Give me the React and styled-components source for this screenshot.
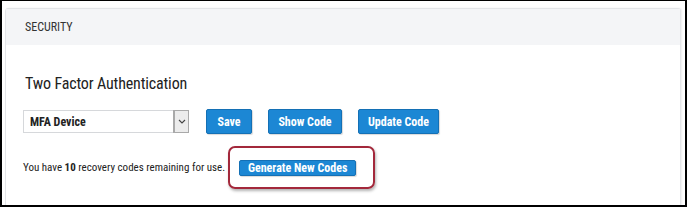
import React from "react";
import styled, { createGlobalStyle } from "styled-components";

const Global = createGlobalStyle`
  html, body { margin: 0; padding: 0; background: #fff; }
  body { font-family: "Roboto Condensed", "Liberation Sans Narrow", Roboto, sans-serif; }
`;

const Frame = styled.div`
  box-sizing: border-box;
  width: 687px;
  height: 207px;
  border: solid #000;
  border-width: 1px 2px 2px 2px;
  padding: 7px 4px 0 3px;
  overflow: hidden;
  background: #fff;
`;

const Card = styled.section`
  box-sizing: border-box;
  height: 210px;
  border: 1px solid #e3e5e8;
  border-radius: 3px;
  box-shadow: 1px 0 2px rgba(0, 0, 0, 0.08);
  background: #fff;
`;

const Header = styled.header`
  height: 36px;
  background: #f4f5f7;
  display: flex;
  align-items: center;
  padding-left: 19px;
  font-size: 12px;
  color: #333;
`;

const Body = styled.div`
  padding: 29px 0 0 19px;
  display: flex;
  flex-direction: column;
`;

const Title = styled.h2`
  margin: 0;
  font-weight: 400;
  font-size: 16px;
  letter-spacing: -0.15px;
  color: #222;
  line-height: 20px;
`;

const Row = styled.div`
  display: flex;
  align-items: center;
  gap: 16px;
  margin: 15px 0 0 -2px;
`;

const SelectBox = styled.div`
  box-sizing: border-box;
  width: 166px;
  height: 23px;
  border: 1px solid #d6d8db;
  display: flex;
  align-items: stretch;
  margin-right: 1px;
  background: #fff;
`;

const SelectText = styled.span`
  flex: 1;
  display: flex;
  align-items: center;
  padding-left: 6px;
  font-size: 12px;
  font-weight: 700;
  color: #222;
`;

const Arrow = styled.span`
  width: 13px;
  background: #ececec;
  border-left: 1px solid #a9a9a9;
  outline: 1px solid #a9a9a9;
  display: flex;
  align-items: center;
  justify-content: center;
`;

const Button = styled.button`
  box-sizing: border-box;
  height: ${(p) => (p.$small ? 16 : 25)}px;
  width: ${(p) => p.$w}px;
  padding: 0;
  border: 1px solid #1470b5;
  border-radius: 2px;
  background: #1c87d4;
  color: #fff;
  font-family: inherit;
  font-size: 12px;
  font-weight: 700;
  box-shadow: 1px 1px 1px rgba(0, 0, 0, 0.15);
  cursor: pointer;
`;

const Recovery = styled.div`
  display: flex;
  align-items: center;
  margin: 12px 0 0 -2px;
`;

const Note = styled.span`
  font-size: 11px;
  color: #222;
  white-space: nowrap;
  flex-shrink: 0;
  margin-right: 3px;
`;

const Highlight = styled.div`
  box-sizing: border-box;
  width: 147px;
  height: 43px;
  border: 2px solid #a3283b;
  border-radius: 7px;
  box-shadow: 1px 2px 3px rgba(0, 0, 0, 0.3);
  display: flex;
  align-items: center;
  padding-left: 9px;
`;

export default function App() {
  return (
    <>
      <Global />
      <Frame>
        <Card>
          <Header>SECURITY</Header>
          <Body>
            <Title>Two Factor Authentication</Title>
            <Row>
              <SelectBox>
                <SelectText>MFA Device</SelectText>
                <Arrow>
                  <svg width="8" height="5" viewBox="0 0 8 5">
                    <path d="M1 1 L4 4 L7 1" fill="none" stroke="#444" strokeWidth="1.1" />
                  </svg>
                </Arrow>
              </SelectBox>
              <Button $w={46}>Save</Button>
              <Button $w={74}>Show Code</Button>
              <Button $w={81}>Update Code</Button>
            </Row>
            <Recovery>
              <Note>
                You have <b>10</b> recovery codes remaining for use.
              </Note>
              <Highlight>
                <Button $w={117} $small>Generate New Codes</Button>
              </Highlight>
            </Recovery>
          </Body>
        </Card>
      </Frame>
    </>
  );
}
